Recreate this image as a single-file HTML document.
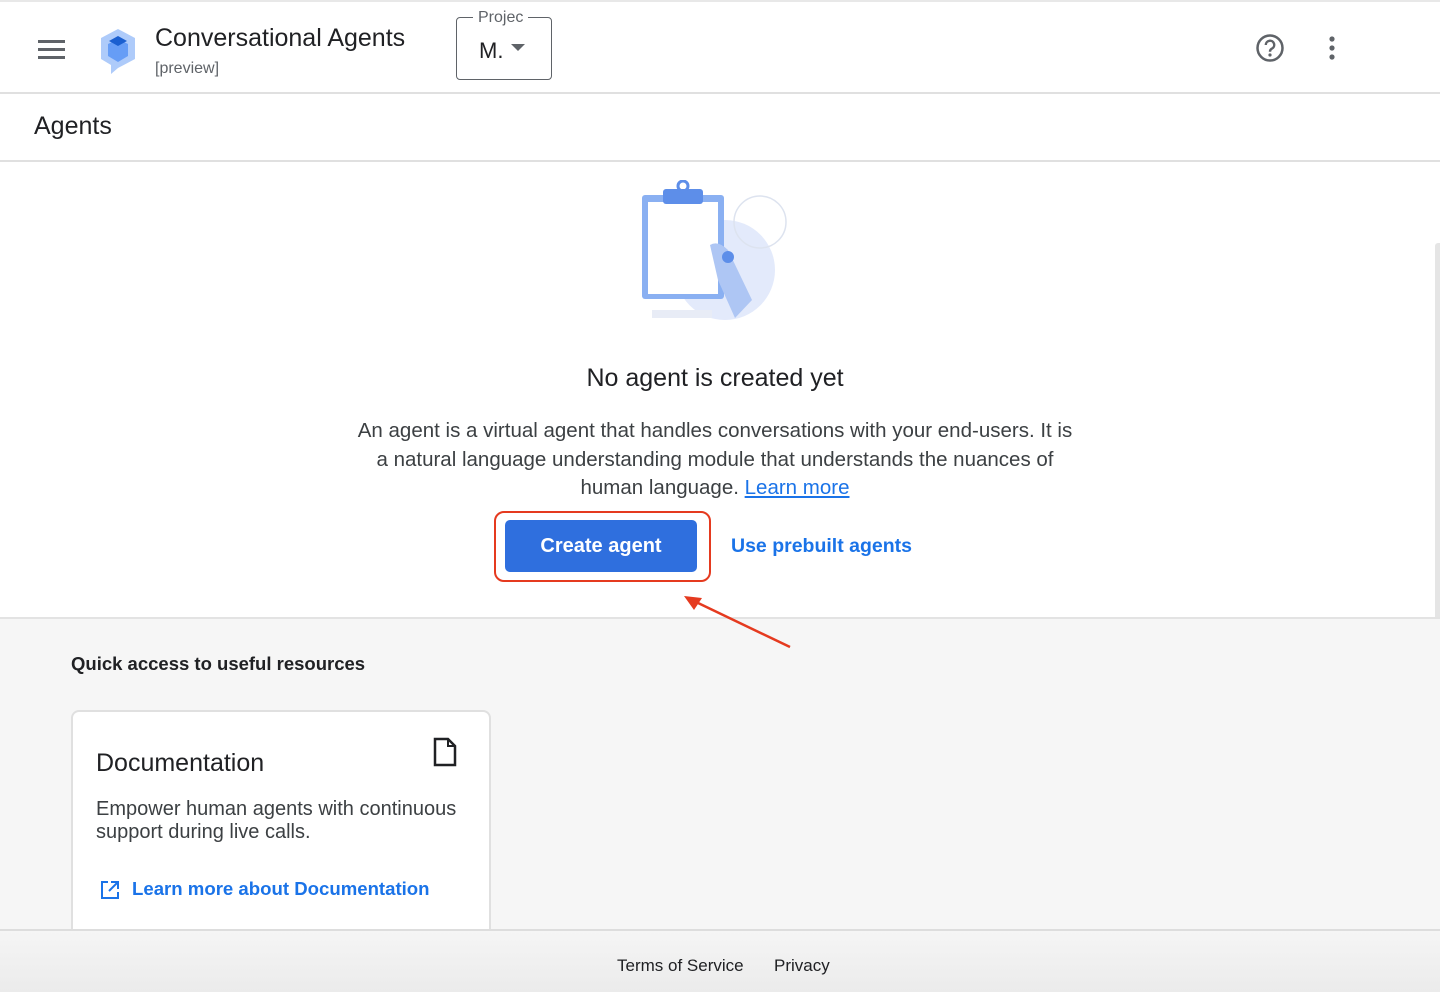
<!DOCTYPE html>
<html><head><meta charset="utf-8"><style>
*{box-sizing:border-box;margin:0;padding:0}
body{width:1440px;height:992px;overflow:hidden;background:#fff;font-family:"Liberation Sans",Arial,sans-serif;color:#202124;position:relative}
.top{position:absolute;left:0;top:0;width:1440px;height:94px;border-top:2px solid #e8e8e8;border-bottom:2px solid #e0e0e0;background:#fff}
.ham{position:absolute;left:38px;top:38px;width:27px}
.ham i{display:block;height:3px;background:#5f6368;margin-bottom:5px}
.title{position:absolute;left:155px;top:22px;font-size:25px;color:#202124}
.sub{position:absolute;left:155px;top:58px;font-size:16px;color:#5f6368}
.proj{position:absolute;left:456px;top:15px;width:96px;height:63px;border:1.5px solid #5f6368;border-radius:4px}
.proj .lab{position:absolute;left:16px;top:-9px;background:#fff;padding:0 5px;font-size:16px;color:#5f6368}
.proj .v{position:absolute;left:22px;top:20px;font-size:22px}
.agents{position:absolute;left:0;top:94px;width:1440px;height:68px;border-bottom:2px solid #e0e0e0;font-size:25px;padding:18px 0 0 34px}
.h{position:absolute;left:0;width:1440px;text-align:center}
.lower{position:absolute;left:0;top:617px;width:1440px;height:313px;background:#f6f6f6;border-top:2px solid #e3e3e3}
.card{position:absolute;left:71px;top:710px;width:420px;height:230px;background:#fff;border:2px solid #e0e0e0;border-radius:8px}
.foot{position:absolute;left:0;top:929px;width:1440px;height:63px;background:linear-gradient(180deg,#f5f5f5,#ebebeb);border-top:2px solid #ddd}
a{color:#1a73e8}
</style></head><body>
<div class="top">
<div class="ham"><i></i><i></i><i></i></div>
<svg style="position:absolute;left:99px;top:25px" width="38" height="48" viewBox="0 0 38 48"><path d="M19 2 L36 11 V32 L19 41 L12 47 V38 L2 32 V11Z" fill="#aecbfa"/><path d="M19 12 L29 17 V29 L19 35 L9 29 V17Z" fill="#669df6"/><path d="M19 9 L28 14 L19 19 L10 14Z" fill="#1a5fd0"/></svg>
<div class="title">Conversational Agents</div>
<div class="sub">[preview]</div>
<div class="proj"><span class="lab">Projec</span><span class="v">M.</span><svg style="position:absolute;left:54px;top:26px" width="14" height="8"><path d="M0 0h14L7 7z" fill="#5f6368"/></svg></div>
<svg style="position:absolute;left:1255px;top:31px" width="30" height="30" viewBox="0 0 30 30"><circle cx="15" cy="15" r="12.5" fill="none" stroke="#5f6368" stroke-width="2.5"/><path d="M10.8 12a4.2 4.2 0 1 1 6 3.7c-1.3.7-1.8 1.5-1.8 3" fill="none" stroke="#5f6368" stroke-width="2.4"/><circle cx="15" cy="22" r="1.6" fill="#5f6368"/></svg>
<svg style="position:absolute;left:1328px;top:34px" width="8" height="26"><circle cx="4" cy="3" r="2.6" fill="#5f6368"/><circle cx="4" cy="12" r="2.6" fill="#5f6368"/><circle cx="4" cy="21" r="2.6" fill="#5f6368"/></svg>
</div>
<div class="agents">Agents</div>
<div style="position:absolute;right:0;top:243px;width:5px;height:374px;background:#e5e5e5;border-radius:3px 0 0 0"></div>
<svg style="position:absolute;left:640px;top:180px" width="150" height="145" viewBox="0 0 150 145">
<circle cx="85" cy="90" r="50" fill="#e3eafb"/>
<circle cx="120" cy="42" r="26" fill="none" stroke="#dde3ef" stroke-width="1.5"/>
<rect x="12" y="130" width="60" height="8" fill="#e8ecf6"/>
<rect x="2" y="15" width="82" height="104" rx="3" fill="#8ab0f2"/>
<rect x="8" y="22" width="70" height="92" fill="#fff"/>
<rect x="23" y="9" width="40" height="15" rx="3" fill="#5d8ee9"/>
<circle cx="43" cy="6" r="5" fill="none" stroke="#5d8ee9" stroke-width="3"/>
<path d="M70 65 Q78 60 88 70 L112 120 L95 138 L78 100 Z" fill="#aec6f4"/>
<circle cx="88" cy="77" r="6" fill="#5d8ee9"/>
</svg>
<div class="h" style="top:364px;font-size:25px;padding-right:10px">No agent is created yet</div>
<div class="h" style="top:417px;font-size:20.5px;line-height:28.5px;color:#3c4043;padding-right:10px">An agent is a virtual agent that handles conversations with your end-users. It is<br>a natural language understanding module that understands the nuances of<br>human language. <a href="#">Learn more</a></div>
<div style="position:absolute;left:494px;top:511px;width:217px;height:71px;border:2.5px solid #e53a1f;border-radius:10px"></div>
<div style="position:absolute;left:505px;top:520px;width:192px;height:52px;background:#2f6fde;border-radius:5px;color:#fff;font-size:20px;text-align:center;line-height:52px;font-weight:bold">Create agent</div>
<div style="position:absolute;left:731px;top:535px;font-size:19.5px;color:#1a73e8;font-weight:bold">Use prebuilt agents</div>
<div class="lower"></div>
<svg style="position:absolute;left:680px;top:590px;z-index:2" width="115" height="62"><path d="M110 57 L16 12" stroke="#e53a1f" stroke-width="2.5"/><path d="M4 6 L22 8 L14 20Z" fill="#e53a1f"/></svg>
<div style="position:absolute;left:71px;top:653px;font-size:18.5px;font-weight:bold;color:#202124">Quick access to useful resources</div>
<div class="card">
<div style="position:absolute;left:23px;top:37px;font-size:25px">Documentation</div>
<svg style="position:absolute;left:360px;top:25px" width="24" height="30" viewBox="0 0 24 30"><path d="M2 2h13l7 7v19H2z" fill="none" stroke="#202124" stroke-width="2.5"/><path d="M15 2v7h7" fill="none" stroke="#202124" stroke-width="2"/></svg>
<div style="position:absolute;left:23px;top:86px;font-size:20px;line-height:23px;color:#3c4043">Empower human agents with continuous<br>support during live calls.</div>
<svg style="position:absolute;left:27px;top:168px" width="20" height="20" viewBox="0 0 20 20"><path d="M8 2H2v16h16v-6M11 2h7v7M18 2L9 11" fill="none" stroke="#1a73e8" stroke-width="2"/></svg>
<div style="position:absolute;left:59px;top:166px;font-size:18.6px;color:#1a73e8;font-weight:bold">Learn more about Documentation</div>
</div>
<div class="foot"><div style="position:absolute;left:617px;top:25px;font-size:17px;color:#202124">Terms of Service</div><div style="position:absolute;left:774px;top:25px;font-size:17px;color:#202124">Privacy</div></div>
</body></html>
